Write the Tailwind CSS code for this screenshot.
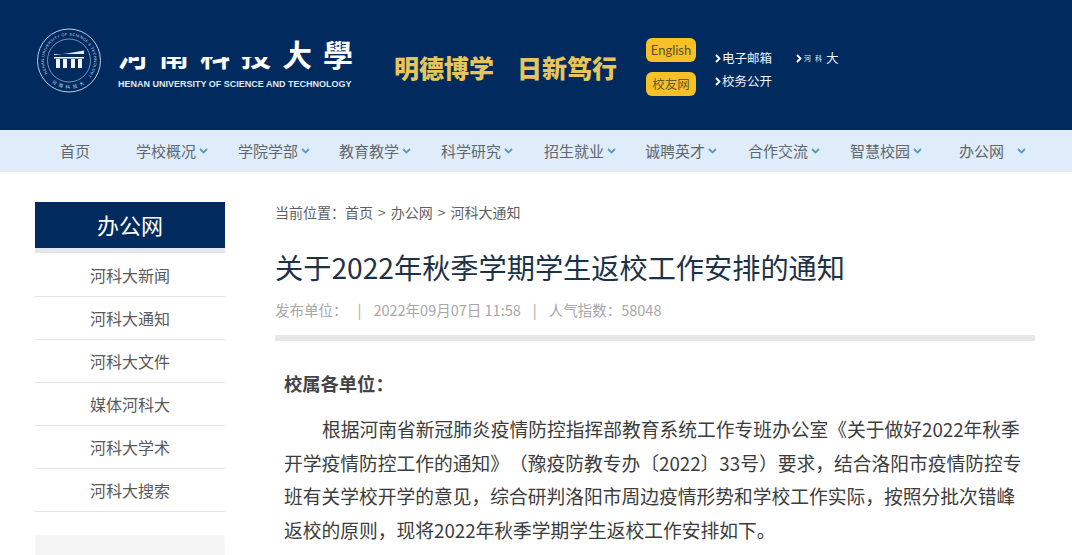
<!DOCTYPE html>
<html lang="zh-CN">
<head>
    <meta charset="UTF-8">
    <title>关于2022年秋季学期学生返校工作安排的通知</title>
    <script src="https://cdn.jsdelivr.net/npm/@tailwindcss/browser@4"></script>
</head>
<body class="bg-white overflow-hidden [text-spacing-trim:space-all] font-['Noto_Sans_CJK_SC','Noto_Sans',sans-serif]">
    <div class="w-[1072px] h-[555px] overflow-hidden">
        <!-- header -->
        <header class="h-[130px] bg-[#012a5e] flex items-start pl-[36px]">
            <svg class="mt-[28px] shrink-0" width="66" height="66" viewBox="0 0 66 66" fill="none">
                <circle cx="33" cy="32.5" r="31.5" stroke="#b9cfe6" stroke-width="1"/>
                <circle cx="33" cy="32.5" r="21.5" stroke="#8fb0d2" stroke-width="0.8"/>
                <path id="ring" d="M13.850 48.600A25 25 0 1 1 52.150 48.600" stroke="none"/>
                <text font-size="3.800" fill="#c9dbee" letter-spacing="0.4" font-family="Liberation Sans"><textPath href="#ring" startOffset="4">HENAN UNIVERSITY OF SCIENCE &amp; TECHNOLOGY</textPath></text>
                <path id="ring2" d="M15 53.900A28 28 0 0 0 51 53.900" stroke="none"/>
                <text font-size="4.500" fill="#c9dbee" letter-spacing="3"><textPath href="#ring2" startOffset="1">河南科技大学</textPath></text>
                <path d="M18 27l13 -1.500 17 -3v3.500h-30z" fill="#e6edf4"/>
                <path d="M20 31h4v9h-4zM27 31h4v9h-4zM35 31h4v9h-4zM42 31h4v9h-4z" fill="#f1f5f9"/>
                <path d="M18 29h30v1.500h-30z" fill="#fff"/>
            </svg>
            <div class="relative ml-[16px] mt-[31px] w-[240px] shrink-0">
                <div class="text-[30px] leading-[44px] tracking-[11px] font-bold text-white whitespace-nowrap font-['Noto_Sans_CJK_TC',sans-serif]">河南科技大學</div>
                <div class="absolute left-0 top-0 w-[172px] h-[26px] bg-[#012a5e]"></div>
                <div class="mt-[3px] text-[9px] leading-[12px] font-bold text-[#dcebf5] whitespace-nowrap font-['Liberation_Sans',sans-serif]">HENAN UNIVERSITY OF SCIENCE AND TECHNOLOGY</div>
            </div>
            <div class="ml-[36px] mt-[49px] flex gap-[23px] text-[25px] leading-[36px] font-black text-[#e6c65c] whitespace-nowrap shrink-0">
                <span>明德博学</span>
                <span>日新笃行</span>
            </div>
            <div class="ml-[29px] mt-[38px] flex flex-col gap-[10px] w-[50px] shrink-0">
                <div class="h-[24px] rounded-[6px] bg-[#f6c026] text-[#5c5030] text-[13px] leading-[24px] text-center font-['Lato',sans-serif]">English</div>
                <div class="h-[24px] rounded-[6px] bg-[#f6c026] text-[#6a5a2a] text-[12.500px] leading-[24px] text-center">校友网</div>
            </div>
            <div class="ml-[19px] mt-[52px] grid grid-cols-[81px_auto] gap-y-[11px] text-[12.500px] leading-[12px] text-[#eef4fa] whitespace-nowrap">
                <div class="flex items-center gap-[1px]">
                    <svg width="6" height="9" viewBox="0 0 6 9" fill="none"><path d="M1 1l3.500 3.500L1 8" stroke="#fff" stroke-width="1.800"/></svg>
                    <span>电子邮箱</span>
                </div>
                <div class="flex items-center gap-[1px]">
                    <svg width="6" height="9" viewBox="0 0 6 9" fill="none"><path d="M1 1l3.500 3.500L1 8" stroke="#fff" stroke-width="1.800"/></svg>
                    <span class="text-[7px] tracking-[4px] ml-[1px]">河科</span><span class="-ml-[1px]">大</span>
                </div>
                <div class="flex items-center gap-[1px]">
                    <svg width="6" height="9" viewBox="0 0 6 9" fill="none"><path d="M1 1l3.500 3.500L1 8" stroke="#fff" stroke-width="1.800"/></svg>
                    <span>校务公开</span>
                </div>
            </div>
        </header>

        <!-- nav -->
        <nav class="h-[42px] bg-[#dfecf9] flex items-center pl-[60px] text-[15px] text-[#5f666e] whitespace-nowrap">
            <div class="w-[76px]">首页</div>
            <div class="w-[102px] flex items-center gap-[3px]">学校概况<svg width="9" height="6" viewBox="0 0 9 6" fill="none"><path d="M1 1l3.500 3.500L8 1" stroke="#5b9bb5" stroke-width="1.800"/></svg></div>
            <div class="w-[101px] flex items-center gap-[3px]">学院学部<svg width="9" height="6" viewBox="0 0 9 6" fill="none"><path d="M1 1l3.500 3.500L8 1" stroke="#5b9bb5" stroke-width="1.800"/></svg></div>
            <div class="w-[102px] flex items-center gap-[3px]">教育教学<svg width="9" height="6" viewBox="0 0 9 6" fill="none"><path d="M1 1l3.500 3.500L8 1" stroke="#5b9bb5" stroke-width="1.800"/></svg></div>
            <div class="w-[103px] flex items-center gap-[3px]">科学研究<svg width="9" height="6" viewBox="0 0 9 6" fill="none"><path d="M1 1l3.500 3.500L8 1" stroke="#5b9bb5" stroke-width="1.800"/></svg></div>
            <div class="w-[101px] flex items-center gap-[3px]">招生就业<svg width="9" height="6" viewBox="0 0 9 6" fill="none"><path d="M1 1l3.500 3.500L8 1" stroke="#5b9bb5" stroke-width="1.800"/></svg></div>
            <div class="w-[103px] flex items-center gap-[3px]">诚聘英才<svg width="9" height="6" viewBox="0 0 9 6" fill="none"><path d="M1 1l3.500 3.500L8 1" stroke="#5b9bb5" stroke-width="1.800"/></svg></div>
            <div class="w-[102px] flex items-center gap-[3px]">合作交流<svg width="9" height="6" viewBox="0 0 9 6" fill="none"><path d="M1 1l3.500 3.500L8 1" stroke="#5b9bb5" stroke-width="1.800"/></svg></div>
            <div class="w-[109px] flex items-center gap-[3px]">智慧校园<svg width="9" height="6" viewBox="0 0 9 6" fill="none"><path d="M1 1l3.500 3.500L8 1" stroke="#5b9bb5" stroke-width="1.800"/></svg></div>
            <div class="flex items-center gap-[13px]">办公网<svg width="9" height="6" viewBox="0 0 9 6" fill="none"><path d="M1 1l3.500 3.500L8 1" stroke="#5b9bb5" stroke-width="1.800"/></svg></div>
        </nav>

        <div class="flex items-start pl-[35px] pr-[37px]">
            <!-- sidebar -->
            <aside class="w-[190px] shrink-0 mt-[30px]">
                <div class="h-[46px] bg-[#012a5e] text-white text-[22px] leading-[45px] text-center">办公网</div>
                <div class="h-[5px] bg-[#e3e6ea]"></div>
                <ul class="text-[16px] text-[#5a5a5a] text-center">
                    <li class="h-[44px] leading-[45px] border-b border-[#e6e6e6]">河科大新闻</li>
                    <li class="h-[43px] leading-[42px] border-b border-[#e6e6e6]">河科大通知</li>
                    <li class="h-[43px] leading-[42px] border-b border-[#e6e6e6]">河科大文件</li>
                    <li class="h-[43px] leading-[42px] border-b border-[#e6e6e6]">媒体河科大</li>
                    <li class="h-[43px] leading-[42px] border-b border-[#e6e6e6]">河科大学术</li>
                    <li class="h-[43px] leading-[42px] border-b border-[#e6e6e6]">河科大搜索</li>
                </ul>
                <div class="mt-[23px] h-[40px] bg-[#f5f5f6] rounded-t-[4px]"></div>
            </aside>

            <!-- article -->
            <main class="ml-[50px] w-[760px] shrink-0">
                <div class="mt-[31px] text-[14px] leading-[18px] text-[#5f5f5f] whitespace-nowrap flex">
                    <span>当前位置：首页</span>
                    <span class="mx-[5px]">&gt;</span>
                    <span>办公网</span>
                    <span class="mx-[5px]">&gt;</span>
                    <span>河科大通知</span>
                </div>
                <h1 class="mt-[26px] text-[28.200px] leading-[40px] text-[#1d3247] whitespace-nowrap">关于2022年秋季学期学生返校工作安排的通知</h1>
                <div class="mt-[13px] text-[14.500px] leading-[20px] text-[#a8a8a8] whitespace-nowrap flex">
                    <span>发布单位：</span>
                    <span class="ml-[10px]">|</span>
                    <span class="ml-[12px]">2022年09月07日 11:58</span>
                    <span class="ml-[12px]">|</span>
                    <span class="ml-[12px]">人气指数：58048</span>
                </div>
                <div class="mt-[15px] h-[6px] bg-[#e8e8e8]"></div>
                <div class="pl-[9px] text-[#3c3c3c] whitespace-nowrap">
                    <p class="mt-[28px] text-[18.300px] leading-[28px] font-bold text-[#444]">校属各单位：</p>
                    <p class="mt-[15px] text-[18.750px] leading-[33.700px]">
                        <span class="block pl-[38px]">根据河南省新冠肺炎疫情防控指挥部教育系统工作专班办公室《关于做好2022年秋季</span>
                        <span class="block">开学疫情防控工作的通知》（豫疫防教专办〔2022〕33号）要求，结合洛阳市疫情防控专</span>
                        <span class="block">班有关学校开学的意见，综合研判洛阳市周边疫情形势和学校工作实际，按照分批次错峰</span>
                        <span class="block">返校的原则，现将2022年秋季学期学生返校工作安排如下。</span>
                    </p>
                </div>
            </main>
        </div>
    </div>
</body>
</html>
